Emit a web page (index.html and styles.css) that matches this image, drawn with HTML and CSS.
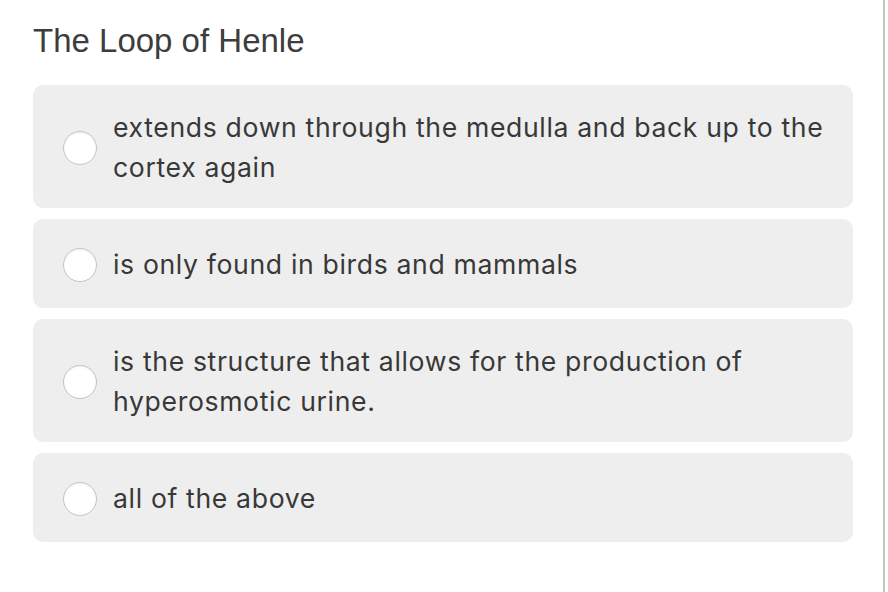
FILE: index.html
```html
<!DOCTYPE html>
<html lang="en">
<head>
<meta charset="utf-8">
<title>The Loop of Henle</title>
<link rel="stylesheet" href="styles.css">
</head>
<body>
<main class="panel">
  <h1 class="title">The Loop of Henle</h1>
  <div class="options">
    <label class="option">
      <span class="radio"></span>
      <span class="text">extends down through the medulla and back up to the cortex again</span>
    </label>
    <label class="option">
      <span class="radio"></span>
      <span class="text">is only found in birds and mammals</span>
    </label>
    <label class="option">
      <span class="radio"></span>
      <span class="text">is the structure that allows for the production of hyperosmotic urine.</span>
    </label>
    <label class="option">
      <span class="radio"></span>
      <span class="text">all of the above</span>
    </label>
  </div>
</main>
</body>
</html>
```
FILE: styles.css
```css
html, body {
  margin: 0;
  padding: 0;
  background: #ffffff;
}
body {
  width: 888px;
  height: 592px;
  overflow: hidden;
}
.panel {
  box-sizing: border-box;
  width: 885px;
  height: 600px;
  border-right: 2px solid #c4c4c4;
  padding: 21px 30px 0 33px;
}
.title {
  margin: 0 0 24px 0;
  font-family: "Liberation Sans", Arial, sans-serif;
  font-weight: 400;
  font-size: 33px;
  line-height: 40px;
  color: #3d3d3d;
}
.options {
  display: flex;
  flex-direction: column;
  gap: 11px;
}
.option {
  display: flex;
  align-items: center;
  gap: 16px;
  min-height: 45px;
  padding: 23px 20px 21px 30px;
  background: #eeeeee;
  border-radius: 10px;
}
.radio {
  flex: none;
  box-sizing: border-box;
  width: 34px;
  height: 34px;
  border-radius: 50%;
  background: #ffffff;
  border: 1.5px solid #c4c4c4;
  box-shadow: inset 0 1px 2px rgba(0, 0, 0, 0.06);
}
.text {
  font-family: Inter, "Noto Sans", sans-serif;
  font-size: 26.6px;
  letter-spacing: 0.65px;
  line-height: 39.5px;
  color: #383838;
}
```
